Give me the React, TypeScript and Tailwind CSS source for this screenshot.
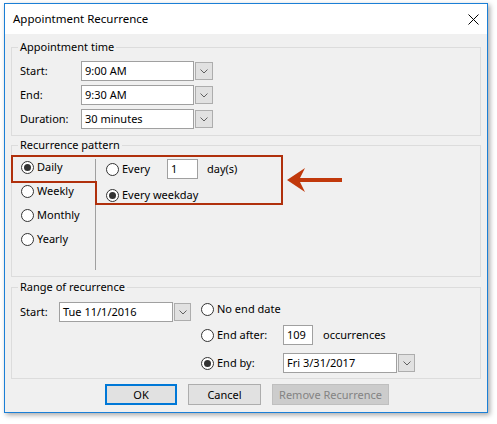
import type { ReactNode } from 'react';

// Small Win10-style controls used by the recurrence dialog

function Radio({ checked = false }: { checked?: boolean }) {
  return (
    <span className="w-[13px] h-[13px] rounded-full border border-[#333333] bg-white flex items-center justify-center shrink-0">
      {checked && <span className="w-[7px] h-[7px] rounded-full bg-[#333333]" />}
    </span>
  );
}

function Chevron() {
  return (
    <svg width="8" height="5" viewBox="0 0 8 5" fill="none">
      <path d="M0.5 0.5 L4 4 L7.5 0.5" stroke="#606060" strokeWidth="1" />
    </svg>
  );
}

function Combo({ value, width, btnWidth = 18 }: { value: string; width: number; btnWidth?: number }) {
  return (
    <div className="flex items-center">
      <div
        className="h-[20px] border border-[#a0a0a0] bg-white pl-[3px] flex items-center leading-[16px]"
        style={{ width }}
      >
        {value}
      </div>
      <div
        className="h-[18px] ml-px bg-[#e1e1e1] border border-[#adadad] flex items-center justify-center"
        style={{ width: btnWidth }}
      >
        <Chevron />
      </div>
    </div>
  );
}

function TextBox({ value, width }: { value: string; width: number }) {
  return (
    <div
      className="h-[20px] border border-[#a0a0a0] bg-white pl-[3px] flex items-center leading-[16px]"
      style={{ width }}
    >
      {value}
    </div>
  );
}

function Group({ title, children, className = '' }: { title: string; children: ReactNode; className?: string }) {
  return (
    <fieldset className={`border border-[#dcdcdc] p-0 ${className}`}>
      <legend className="ml-[6px] px-[2px] leading-[16px]">{title}</legend>
      {children}
    </fieldset>
  );
}

function Option({ label, checked, width }: { label: string; checked?: boolean; width?: number }) {
  return (
    <div className="flex items-center gap-[3px]" style={width ? { width } : undefined}>
      <Radio checked={checked} />
      <span className="leading-[16px]">{label}</span>
    </div>
  );
}

export default function App() {
  return (
    <div className="relative w-[497px] h-[424px] bg-white pt-[3px] pl-[4px] font-['Noto_Sans',sans-serif] text-[11px] text-black">
      <div className="w-[484px] h-[410px] border border-[#1b7fd6] bg-[#f0f0f0] flex flex-col shadow-[2px_2px_5px_rgba(0,0,0,0.35)]">
        {/* title bar */}
        <div className="h-[30px] bg-white flex items-center justify-between pl-[8px] pr-[8px]">
          <span className="text-[11.5px] leading-[16px]">Appointment Recurrence</span>
          <svg width="11" height="11" viewBox="0 0 11 11">
            <path d="M0.5 0.5 L10.5 10.5 M10.5 0.5 L0.5 10.5" stroke="#000" strokeWidth="1" />
          </svg>
        </div>

        <div className="flex-1 px-[6px] pt-[5px] flex flex-col">
          <Group title="Appointment time">
            <div className="pt-[6px] pb-[6px] pl-[8px] flex flex-col gap-[4px]">
              {[
                ['Start:', '9:00 AM'],
                ['End:', '9:30 AM'],
                ['Duration:', '30 minutes'],
              ].map(([label, value]) => (
                <div key={label} className="flex items-center h-[20px]">
                  <span className="w-[61px] leading-[16px]">{label}</span>
                  <Combo value={value} width={113} />
                </div>
              ))}
            </div>
          </Group>

          <Group title="Recurrence pattern" className="mt-px">
            <div className="h-[123px] pt-[2px] flex">
              <div className="w-[83px] pl-[9px] flex flex-col">
                <div className="h-[24px] flex items-center"><Option label="Daily" checked /></div>
                <div className="h-[24px] flex items-center"><Option label="Weekly" /></div>
                <div className="h-[24px] flex items-center"><Option label="Monthly" /></div>
                <div className="h-[24px] flex items-center"><Option label="Yearly" /></div>
              </div>
              <div className="w-px h-[111px] mt-[4px] bg-[#a0a0a0]" />
              <div className="pl-[10px] pt-[4px] flex flex-col gap-[6px]">
                <div className="h-[20px] flex items-center">
                  <Option label="Every" width={61} />
                  <TextBox value="1" width={31} />
                  <span className="ml-[9px] leading-[16px]">day(s)</span>
                </div>
                <div className="h-[20px] flex items-center">
                  <Option label="Every weekday" checked />
                </div>
              </div>
            </div>
          </Group>

          <Group title="Range of recurrence" className="mt-[2px]">
            <div className="pb-[5px] flex">
              <div className="pl-[8px] pt-[7px] flex items-start">
                <span className="w-[39px] h-[20px] flex items-center leading-[16px]">Start:</span>
                <Combo value="Tue 11/1/2016" width={114} btnWidth={17} />
              </div>
              <div className="ml-[10px] pt-[4px] flex flex-col">
                <div className="h-[20px] flex items-center">
                  <Option label="No end date" />
                </div>
                <div className="h-[20px] mt-[6px] flex items-center">
                  <Option label="End after:" width={82} />
                  <TextBox value="109" width={30} />
                  <span className="ml-[10px] leading-[16px]">occurrences</span>
                </div>
                <div className="h-[20px] mt-[8px] flex items-center">
                  <Option label="End by:" checked width={82} />
                  <Combo value="Fri 3/31/2017" width={114} btnWidth={17} />
                </div>
              </div>
            </div>
          </Group>

          <div className="mt-[5px] pl-[94px] flex gap-[11px]">
            <button className="w-[72px] h-[21px] border-2 border-[#0078d7] bg-[#e1e1e1] leading-[16px]">OK</button>
            <button className="w-[73px] h-[21px] border border-[#adadad] bg-[#e1e1e1] leading-[16px]">Cancel</button>
            <button className="w-[117px] h-[21px] border border-[#bfbfbf] bg-[#cccccc] text-[#838383] leading-[16px]">
              Remove Recurrence
            </button>
          </div>
        </div>
      </div>

      {/* callout box and arrow drawn over the dialog */}
      <svg className="absolute inset-0 pointer-events-none" width="497" height="424" viewBox="0 0 497 424">
        <polygon
          points="12,156 282,156 282,204 96,204 96,182 12,182"
          fill="none"
          stroke="#b0300c"
          strokeWidth="2"
        />
        <path d="M287 180 L305 168 L300 178 L342 178 L342 182 L300 182 L305 192 Z" fill="#c1390b" />
      </svg>
    </div>
  );
}
